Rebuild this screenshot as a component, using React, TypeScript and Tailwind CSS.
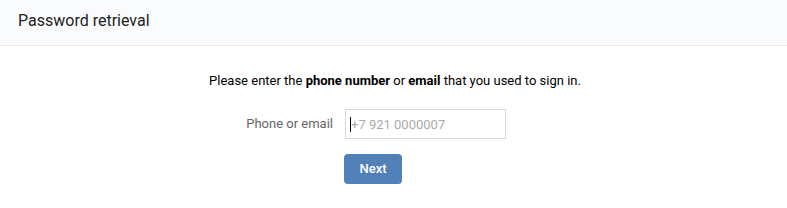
import React from "react";

export default function App() {
  return (
    <div className="h-[208px] w-full bg-white font-['Roboto',sans-serif]">
      {/* Header */}
      <div className="flex h-[46px] items-center border-b border-[#e7e8ec] bg-[#fafbfc] px-[18px] pb-[3px]">
        <h1 className="text-[16px] text-[#222]">Password retrieval</h1>
      </div>

      {/* Body */}
      <div className="flex flex-col items-center pt-[26px]">
        <p className="pl-[3px] text-[13px] leading-[18px] text-[#000]">
          Please enter the <b className="font-bold">phone number</b> or{" "}
          <b className="font-bold">email</b> that you used to sign in.
        </p>

        <div className="mt-[19px] flex items-center gap-3">
          <label className="w-[156px] text-right text-[13px] text-[#656565]">
            Phone or email
          </label>
          <div className="relative w-[161px]">
            <input
              className="h-[30px] w-[161px] border border-[#d3d9de] px-[5px] text-[13px] text-[#000] outline-none placeholder:text-[#aaaaaa]"
              placeholder="+7 921 0000007"
            />
            <span className="absolute left-[5px] top-[8px] h-[15px] w-px bg-black" />
          </div>
          <div className="w-[92px]" />
        </div>

        <div className="mt-[15px] flex gap-3">
          <div className="w-[155px]" />
          <div className="w-[161px]">
            <button className="h-[30px] w-[58px] rounded-[4px] bg-[#5181b8] text-[13px] font-medium text-white">
              Next
            </button>
          </div>
          <div className="w-[93px]" />
        </div>
      </div>
    </div>
  );
}
